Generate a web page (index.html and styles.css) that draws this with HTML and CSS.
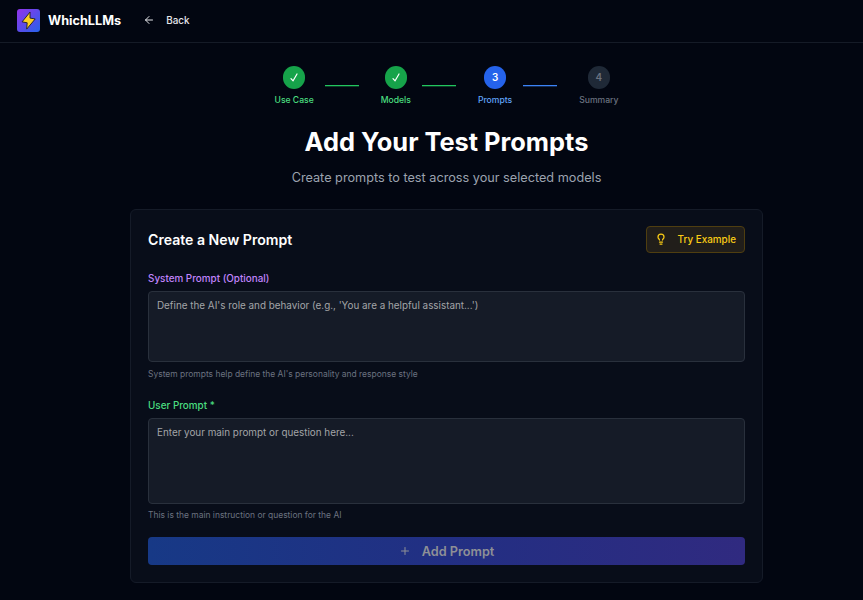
FILE: index.html
```
<!DOCTYPE html>
<html lang="en">
<head>
    <meta charset="UTF-8">
    <meta name="viewport" content="width=device-width, initial-scale=1.0">
    <title>WhichLLMs</title>
    <link rel="stylesheet" href="styles.css">
</head>
<body>
    <!-- Top bar -->
    <header class="header">
        <div class="logo">
            <svg viewBox="0 0 24 24" width="23" height="23">
                <path d="M13.6 3.2 L5.3 13.4 L10.6 14.4 L10.1 21 L19 10.4 L13.6 9.5 Z" fill="#fdd023" stroke="#24202c" stroke-width="1" stroke-linejoin="round"/>
            </svg>
        </div>
        <span class="brand">WhichLLMs</span>
        <a class="back" href="#">
            <svg viewBox="0 0 24 24" width="12" height="12" class="icon">
                <path d="M12 19l-7-7 7-7M19 12H5"/>
            </svg>
            Back
        </a>
    </header>

    <main class="container">
        <!-- Progress steps -->
        <div class="steps">
            <div class="step done">
                <span class="circle"><svg viewBox="0 0 8 9" width="8" height="9" class="check"><path d="M1 5.6L3.1 7.8L7 1"/></svg></span>
                <span class="step-label">Use Case</span>
            </div>
            <div class="line"></div>
            <div class="step done">
                <span class="circle"><svg viewBox="0 0 8 9" width="8" height="9" class="check"><path d="M1 5.6L3.1 7.8L7 1"/></svg></span>
                <span class="step-label">Models</span>
            </div>
            <div class="line"></div>
            <div class="step current">
                <span class="circle">3</span>
                <span class="step-label">Prompts</span>
            </div>
            <div class="line active"></div>
            <div class="step">
                <span class="circle">4</span>
                <span class="step-label">Summary</span>
            </div>
        </div>

        <h1>Add Your Test Prompts</h1>
        <p class="subtitle">Create prompts to test across your selected models</p>

        <!-- Prompt form -->
        <form class="card">
            <div class="card-header">
                <h2>Create a New Prompt</h2>
                <button type="button" class="example-btn">
                    <svg viewBox="0 0 24 24" width="12" height="12" class="icon bulb">
                        <path d="M15 14c.2-1 .7-1.7 1.5-2.5 1-.9 1.5-2.2 1.5-3.5A6 6 0 0 0 6 8c0 1 .2 2.2 1.5 3.5.7.7 1.3 1.5 1.5 2.5M9 18h6M10 22h4"/>
                    </svg>
                    Try Example
                </button>
            </div>

            <label for="system" class="system-label">System Prompt (Optional)</label>
            <textarea id="system" class="system-input" placeholder="Define the AI's role and behavior (e.g., 'You are a helpful assistant...')"></textarea>
            <p class="hint">System prompts help define the AI's personality and response style</p>

            <label for="user" class="user-label">User Prompt *</label>
            <textarea id="user" class="user-input" placeholder="Enter your main prompt or question here..."></textarea>
            <p class="hint">This is the main instruction or question for the AI</p>

            <button type="submit" class="add-btn" disabled>
                <svg viewBox="0 0 24 24" width="12" height="12" class="icon">
                    <path d="M5 12h14M12 5v14"/>
                </svg>
                Add Prompt
            </button>
        </form>
    </main>
</body>
</html>
```
FILE: styles.css
```
* {
    box-sizing: border-box;
}

body, h1, h2, p {
    margin: 0;
    padding: 0;
}

body {
    font-family: 'Inter', sans-serif;
    background-color: #020611;
    color: #fff;
    height: 600px;
    overflow: hidden;
}

button, textarea {
    font-family: inherit;
}

.icon {
    fill: none;
    stroke: currentColor;
    stroke-width: 2;
    stroke-linecap: round;
    stroke-linejoin: round;
}

.bulb {
    stroke-width: 2.5;
}

/* Header */
.header {
    display: flex;
    align-items: center;
    height: 43px;
    padding: 0 17px 2px;
    border-bottom: 1px solid #151b27;
}

.logo {
    width: 23px;
    height: 23px;
    border-radius: 3px;
    background: linear-gradient(135deg, #9333ea, #2563eb);
}

.logo svg {
    display: block;
}

.brand {
    margin-left: 8px;
    font-size: 12.7px;
    font-weight: 700;
}

.back {
    display: flex;
    align-items: center;
    gap: 11px;
    margin-left: 22px;
    font-size: 9.9px;
    font-weight: 500;
    color: #e5e7eb;
    text-decoration: none;
}

.container {
    width: 633px;
    margin-left: 130px;
    padding-top: 23px;
}

/* Steps */
.steps {
    display: flex;
    justify-content: center;
    align-items: flex-start;
    height: 39px;
}

.step {
    display: flex;
    flex-direction: column;
    align-items: center;
    color: #6b7280;
}

.circle {
    display: flex;
    align-items: center;
    justify-content: center;
    width: 22.5px;
    height: 22.5px;
    border-radius: 50%;
    background-color: #1f2937;
    font-size: 9.9px;
    font-weight: 600;
}

.check {
    fill: none;
    stroke: #fff;
    stroke-width: 1.2;
    stroke-linecap: round;
    stroke-linejoin: round;
}

.step-label {
    margin-top: 5px;
    font-size: 8.6px;
    line-height: 12px;
    font-weight: 500;
}

.done {
    color: #4ade80;
}

.done .circle {
    background-color: #16a34a;
    color: #fff;
}

.current {
    color: #60a5fa;
}

.current .circle {
    background-color: #2563eb;
    color: #fff;
}

.line {
    width: 34px;
    height: 1px;
    margin: 19px 22px 0 11px;
    background-color: #22c55e;
    box-shadow: 0 1px 0 rgba(34, 197, 94, 0.3);
}

.line.active {
    background-color: #3b82f6;
    box-shadow: 0 1px 0 rgba(59, 130, 246, 0.3);
}

/* Headings */
h1 {
    margin-top: 21px;
    font-size: 25.4px;
    line-height: 32px;
    font-weight: 700;
    text-align: center;
}

.subtitle {
    margin-top: 9px;
    font-size: 12.7px;
    line-height: 21px;
    color: #9ca3af;
    text-align: center;
}

/* Card */
.card {
    display: flex;
    flex-direction: column;
    height: 374px;
    margin-top: 21px;
    padding: 16px 17px;
    border: 1px solid #151b28;
    border-radius: 6px;
    background-color: #080d19;
}

.card-header {
    display: flex;
    justify-content: space-between;
    align-items: center;
    height: 27px;
}

h2 {
    font-size: 14.1px;
    font-weight: 600;
}

.example-btn {
    display: flex;
    align-items: center;
    gap: 11px;
    height: 27px;
    padding: 0 8px 1px;
    border: 1px solid #4f3e10;
    border-radius: 4px;
    background-color: #211e1a;
    color: #facc15;
    font-size: 9.9px;
    font-weight: 500;
}

label {
    font-size: 9.9px;
    line-height: 14px;
    font-weight: 500;
}

.system-label {
    margin-top: 18px;
    color: #c084fc;
}

.user-label {
    margin-top: 18px;
    color: #4ade80;
}

textarea {
    margin: 6px 0 0;
    padding: 6px 8px;
    border: 1px solid #29303c;
    border-radius: 4px;
    background-color: #151b27;
    color: #fff;
    font-size: 9.87px;
    line-height: 14px;
    resize: none;
}

textarea::placeholder {
    color: #a3a5a8;
}

.system-input {
    height: 71px;
}

.user-input {
    height: 86px;
}

.hint {
    margin-top: 5px;
    font-size: 8.46px;
    line-height: 12px;
    color: #6b7280;
}

.system-input + .hint {
    margin-top: 6px;
}

.add-btn {
    display: flex;
    align-items: center;
    justify-content: center;
    gap: 11px;
    height: 28px;
    margin-top: 16px;
    border: none;
    border-radius: 4px;
    background: linear-gradient(90deg, #173986, #222f83 50%, #302a80);
    color: #8e9096;
    font-size: 12.7px;
    font-weight: 600;
}
```
